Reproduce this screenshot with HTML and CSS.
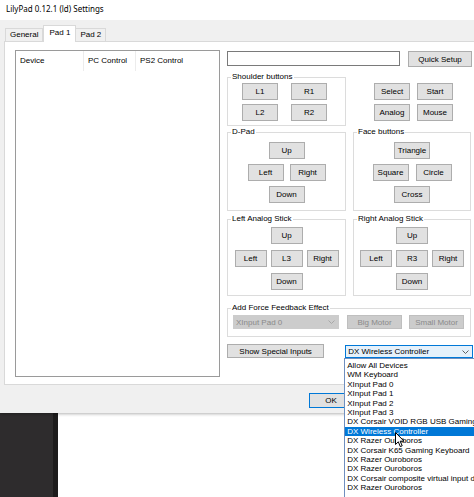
FILE: index.html
```html
<!DOCTYPE html>
<html lang="en">
<head>
  <meta charset="UTF-8" />
  <meta name="viewport" content="width=device-width, initial-scale=1.0"/>
  <title>LilyPad 0.12.1 (ld) Settings</title>
  <link rel="stylesheet" href="styles.css">
</head>
<body>
  <div class="window">
    <div class="titlebar">LilyPad 0.12.1 (ld) Settings</div>

    <div class="tabs">
      <div class="tab">General</div>
      <div class="tab active">Pad 1</div>
      <div class="tab">Pad 2</div>
    </div>

    <div class="panel">
      <div class="listview">
        <div class="lv-head">
          <div class="col c1">Device</div>
          <div class="col c2">PC Control</div>
          <div class="col c3">PS2 Control</div>
        </div>
      </div>

      <div class="controls">
        <div class="top-row">
          <div class="textbox"></div>
          <button class="btn quick">Quick Setup</button>
        </div>

        <div class="shoulder-row">
          <div class="group shoulder">
            <span class="legend">Shoulder buttons</span>
            <div class="pairs">
              <button class="btn">L1</button>
              <button class="btn">R1</button>
              <button class="btn">L2</button>
              <button class="btn">R2</button>
            </div>
          </div>
          <div class="pairs misc">
            <button class="btn">Select</button>
            <button class="btn">Start</button>
            <button class="btn">Analog</button>
            <button class="btn">Mouse</button>
          </div>
        </div>

        <div class="groups">
          <div class="group pad">
            <span class="legend">D-Pad</span>
            <button class="btn">Up</button>
            <div class="mid">
              <button class="btn">Left</button>
              <button class="btn">Right</button>
            </div>
            <button class="btn">Down</button>
          </div>
          <div class="group pad">
            <span class="legend">Face buttons</span>
            <button class="btn">Triangle</button>
            <div class="mid wide">
              <button class="btn">Square</button>
              <button class="btn">Circle</button>
            </div>
            <button class="btn">Cross</button>
          </div>
          <div class="group pad stick">
            <span class="legend">Left Analog Stick</span>
            <button class="btn">Up</button>
            <div class="mid">
              <button class="btn">Left</button>
              <button class="btn">L3</button>
              <button class="btn">Right</button>
            </div>
            <button class="btn">Down</button>
          </div>
          <div class="group pad stick">
            <span class="legend">Right Analog Stick</span>
            <button class="btn">Up</button>
            <div class="mid">
              <button class="btn">Left</button>
              <button class="btn">R3</button>
              <button class="btn">Right</button>
            </div>
            <button class="btn">Down</button>
          </div>
        </div>

        <div class="group ff">
          <span class="legend">Add Force Feedback Effect</span>
          <div class="combo disabled">
            <span>XInput Pad 0</span>
            <svg width="7" height="4" viewBox="0 0 7 4"><polyline points="0.5,0.5 3.5,3.5 6.5,0.5" fill="none" stroke="#a8a8a8" stroke-width="1"/></svg>
          </div>
          <button class="btn disabled big">Big Motor</button>
          <button class="btn disabled small">Small Motor</button>
        </div>

        <div class="bottom-row">
          <button class="btn special">Show Special Inputs</button>
          <div class="combo open">
            <span>DX Wireless Controller</span>
            <svg width="7" height="4" viewBox="0 0 7 4"><polyline points="0.5,0.5 3.5,3.5 6.5,0.5" fill="none" stroke="#606060" stroke-width="1"/></svg>
            <ul class="dropdown">
              <li>Allow All Devices</li>
              <li>WM Keyboard</li>
              <li>XInput Pad 0</li>
              <li>XInput Pad 1</li>
              <li>XInput Pad 2</li>
              <li>XInput Pad 3</li>
              <li>DX Corsair VOID RGB USB Gaming Headset</li>
              <li class="selected">DX Wireless Controller</li>
              <li>DX Razer Ouroboros</li>
              <li>DX Corsair K65 Gaming Keyboard</li>
              <li>DX Razer Ouroboros</li>
              <li>DX Razer Ouroboros</li>
              <li>DX Corsair composite virtual input device</li>
              <li>DX Razer Ouroboros</li>
            </ul>
          </div>
        </div>
      </div>
    </div>

    <div class="footer">
      <button class="btn ok">OK</button>
    </div>
  </div>

  <div class="desktop">
    <div class="desk-dark"></div>
    <div class="desk-edge"></div>
  </div>

  <svg class="cursor" width="10" height="16" viewBox="0 0 10 16">
    <path d="M0.5 0.5 L0.5 12.5 L3.3 9.8 L5.3 14.6 L7.2 13.8 L5.2 9.2 L9 9.2 Z" fill="#fff" stroke="#000" stroke-width="1" stroke-linejoin="round"/>
  </svg>
</body>
</html>
```

FILE: styles.css
```css
html, body {
  margin: 0;
  padding: 0;
}

body {
  width: 474px;
  height: 497px;
  overflow: hidden;
  position: relative;
  background: #fff;
  font-family: "Liberation Sans", Arial, sans-serif;
  font-size: 8px;
  color: #000;
}

.window {
  position: relative;
  z-index: 1;
  width: 492px;
  height: 413px;
  background: #f0f0f0;
  display: flex;
  flex-direction: column;
  box-shadow: 0 1px 3px rgba(0, 0, 0, 0.3);
}

.titlebar {
  height: 20px;
  line-height: 18px;
  padding-left: 6px;
  background: #fff;
  font-family: "Noto Sans", "Liberation Sans", sans-serif;
  font-size: 8px;
}

/* tabs */
.tabs {
  height: 21px;
  display: flex;
  align-items: flex-end;
  padding-left: 5px;
}

.tab {
  height: 12px;
  line-height: 12px;
  padding: 0 4px;
  background: #f0f0f0;
  border: 1px solid #d9d9d9;
  border-bottom: none;
}

.tab + .tab {
  border-left: none;
}

.tab.active {
  position: relative;
  z-index: 2;
  height: 16px;
  line-height: 14px;
  margin-bottom: -1px;
  padding: 0 5px;
  background: #fff;
  border-left: 1px solid #d9d9d9;
}

.tab.active + .tab {
  border-left: none;
}

.panel {
  height: 344px;
  box-sizing: border-box;
  margin-left: 4px;
  padding: 8px 0 7px 10px;
  background: #fff;
  border: 1px solid #d9d9d9;
  border-right: none;
  display: flex;
  gap: 7px;
}

/* device list */
.listview {
  width: 205px;
  box-sizing: border-box;
  border: 1px solid #9a9a9a;
}

.lv-head {
  display: flex;
  height: 20px;
  line-height: 20px;
}

.col {
  box-sizing: border-box;
  padding-left: 4px;
  border-right: 1px solid #ececec;
}

.c1 { width: 68px; }
.c2 { width: 52px; }
.c3 { width: 70px; border-right: none; }

/* right side */
.controls {
  width: 246px;
  display: flex;
  flex-direction: column;
}

.btn {
  font: inherit;
  color: #000;
  background: #e1e1e1;
  border: 1px solid #adadad;
  padding: 0;
  margin: 0;
  box-sizing: border-box;
  height: 17px;
  width: 36px;
  white-space: nowrap;
}

.top-row {
  display: flex;
  margin-top: 1px;
  height: 16px;
}

.textbox {
  width: 173px;
  height: 15px;
  box-sizing: border-box;
  border: 1px solid #7a7a7a;
  background: #fff;
}

.btn.quick {
  width: 64px;
  height: 16px;
  margin-left: 8px;
}

.group {
  position: relative;
  box-sizing: border-box;
  border: 1px solid #dcdcdc;
}

.legend {
  position: absolute;
  top: -7px;
  left: 3px;
  padding: 0 1px;
  line-height: 11px;
  background: #fff;
  white-space: nowrap;
}

.shoulder-row {
  display: flex;
  margin-top: 10px;
}

.shoulder {
  width: 119px;
  height: 49px;
  padding: 5px 0 0 14px;
}

.pairs {
  display: grid;
  grid-template-columns: 36px 36px;
  gap: 4px 13px;
}

.pairs.misc {
  margin-left: 28px;
  padding-top: 6px;
  column-gap: 7px;
  align-self: flex-start;
}

.groups {
  margin-top: 6px;
  display: grid;
  grid-template-columns: 119px 118px;
  grid-template-rows: 79px 77px;
  gap: 8px 7px;
}

.pad {
  display: flex;
  flex-direction: column;
  align-items: center;
  gap: 5px;
  padding-top: 9px;
}

.mid {
  display: flex;
  gap: 6px;
}

.mid.wide {
  gap: 7px;
}

.stick {
  padding-top: 7px;
  gap: 6px;
}

.stick .mid {
  gap: 4px;
}

.stick .btn {
  width: 32px;
}

/* force feedback */
.ff {
  margin-top: 12px;
  width: 244px;
  height: 29px;
  display: flex;
  align-items: flex-start;
  padding: 6px 0 0 5px;
}

.combo {
  position: relative;
  box-sizing: border-box;
  display: flex;
  align-items: center;
  justify-content: space-between;
  padding: 0 3px 0 2px;
}

.combo.disabled {
  width: 106px;
  height: 14px;
  background: #cccccc;
  border: 1px solid #cccccc;
  color: #8a8a8a;
}

.btn.disabled {
  background: #cccccc;
  border-color: #bfbfbf;
  color: #8a8a8a;
  height: 14px;
  width: 55px;
}

.btn.big { margin-left: 8px; }
.btn.small { margin-left: 7px; }

.bottom-row {
  display: flex;
  align-items: flex-start;
  margin-top: 7px;
}

.btn.special {
  width: 99px;
  height: 14px;
}

.combo.open {
  width: 130px;
  height: 13px;
  margin: 1px 0 0 21px;
  background: #e5f1fb;
  border: 1px solid #0078d7;
}

.dropdown {
  position: absolute;
  top: 12px;
  left: -2px;
  width: 140px;
  height: 150px;
  margin: 0;
  padding: 2px 0 0;
  list-style: none;
  background: #fff;
  border: 1px solid #6f8fbf;
  box-sizing: border-box;
}

.dropdown li {
  height: 9.4px;
  line-height: 9.4px;
  padding-left: 2px;
  white-space: nowrap;
  overflow: hidden;
}

.dropdown li.selected {
  background: #0078d7;
  color: #fff;
}

/* bottom buttons */
.footer {
  flex: 1;
  display: flex;
  align-items: flex-start;
  padding: 8px 0 0 309px;
}

.btn.ok {
  width: 44px;
  height: 15px;
  border-color: #0078d7;
}

/* what is behind the window */
.desktop {
  display: flex;
  height: 84px;
}

.desk-dark {
  width: 53px;
  background: #2e2c2d;
}

.desk-edge {
  width: 5px;
  background: #1d1c1c;
}

.cursor {
  position: absolute;
  left: 395px;
  top: 432px;
  z-index: 5;
}
```
